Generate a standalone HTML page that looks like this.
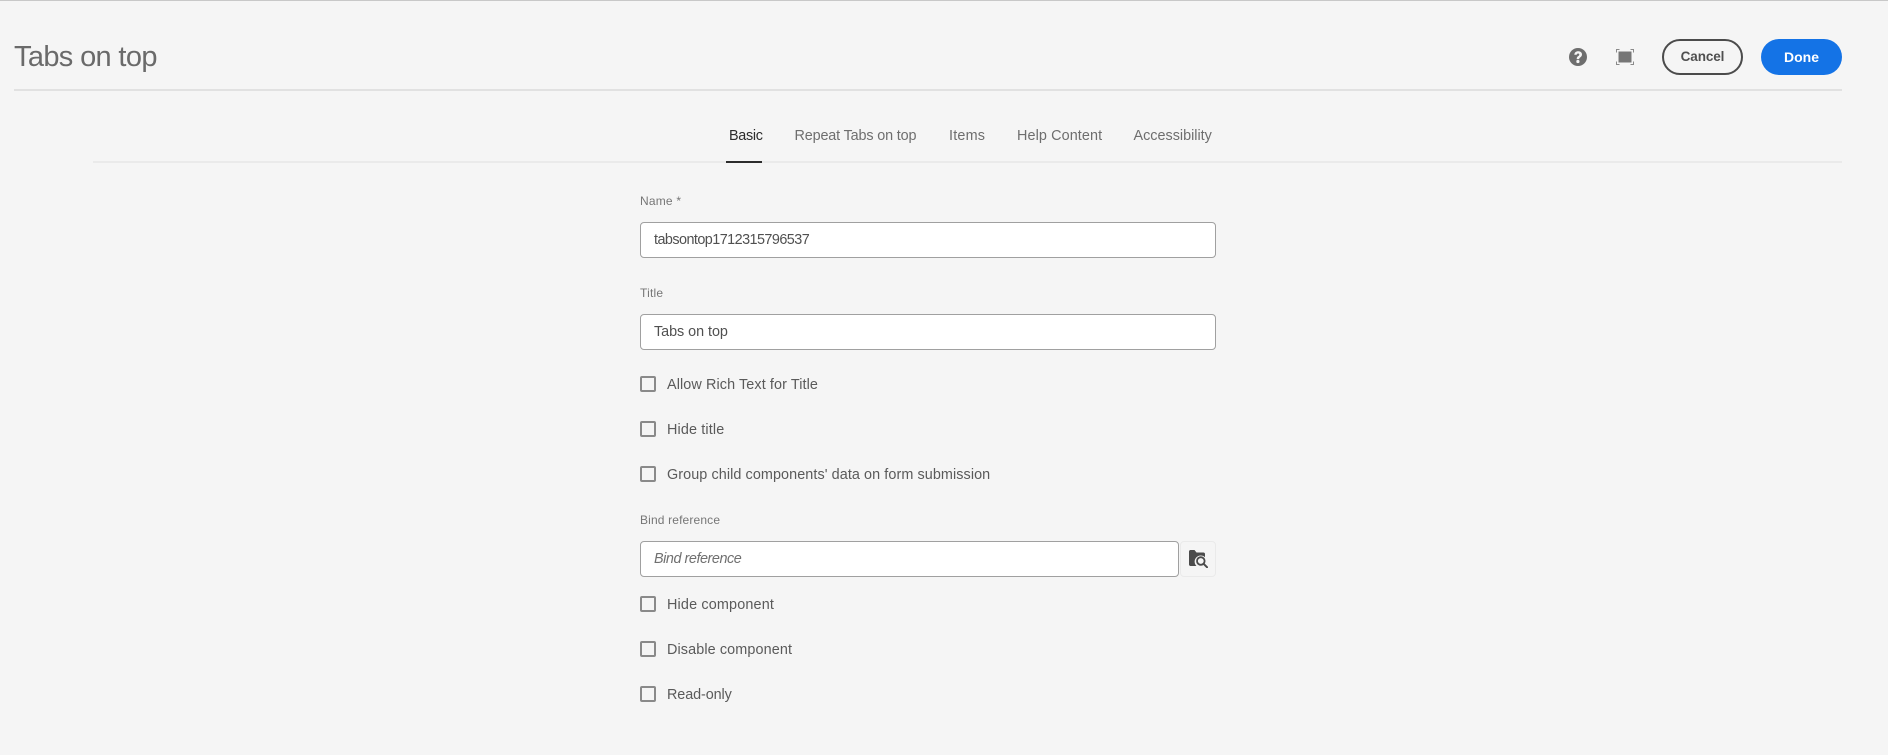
<!DOCTYPE html>
<html lang="en"><head><meta charset="utf-8"><title>Tabs on top</title>
<style>
html,body{margin:0;padding:0;width:1888px;height:755px;overflow:hidden;background:#f5f5f5}
body{position:relative;font-family:"Liberation Sans",sans-serif;color:#4b4b4b}
.a{position:absolute;white-space:nowrap}
.tab{top:125.500px;line-height:20px;font-size:14.4px;color:#6e6e6e;letter-spacing:-.1px}
.lbl{left:640px;line-height:16px;font-size:12px;color:#767676;letter-spacing:.2px}
.inp{box-sizing:border-box;left:640px;width:576px;height:36px;background:#fff;border:1px solid #a0a0a0;border-radius:4px;padding-left:13px;line-height:35px;font-size:14.4px;color:#505050}
.cb{box-sizing:border-box;left:640px;width:16px;height:16px;border:2px solid #8a8a8a;border-radius:2px;background:#f5f5f5}
.ct{left:667px;line-height:20px;font-size:14.4px;color:#5a5a5a}
.btn{box-sizing:border-box;top:39px;width:81px;height:36px;border-radius:18px;text-align:center;font-size:14px;font-weight:bold;line-height:32px}
</style></head><body>
<div class="a" style="left:0;top:0;width:1888px;height:1px;background:#c8c8c8"></div>
<div class="a" style="left:14px;top:39px;font-size:29px;line-height:36px;color:#6a6a6a;letter-spacing:-.65px">Tabs on top</div>
<div class="a" style="left:14px;top:89px;width:1828px;height:2px;background:#e1e1e1"></div>
<svg class="a" style="left:1569px;top:48px" width="18" height="18" viewBox="0 0 18 18"><circle cx="9" cy="9" r="9" fill="#6e6e6e"/><path d="M5.300 6.700C5.500 4.600 7 3.300 9.200 3.300c2.300 0 3.800 1.300 3.800 3.200 0 1.500-.9 2.300-1.900 3-.7.5-.9.900-.9 1.600H7.700c0-1.400.4-2.100 1.300-2.800.8-.6 1.300-1 1.300-1.700s-.5-1.100-1.200-1.100c-.9 0-1.300.5-1.400 1.300z" fill="#f5f5f5"/><circle cx="8.900" cy="13.500" r="1.600" fill="#f5f5f5"/></svg>
<svg class="a" style="left:1616px;top:49px" width="18" height="16" viewBox="0 0 18 16"><rect x="2.500" y="2.500" width="13" height="11" fill="#767676"/><path d="M.5 3.500V.5H3.500M14.500 .5h3V3.500M17.500 12.500v3H14.500M3.500 15.500H.5V12.500" fill="none" stroke="#8a8a8a" stroke-width="1"/></svg>
<div class="a btn" style="left:1662px;border:2px solid #4b4b4b;color:#505050;font-size:13.5px;letter-spacing:-.1px">Cancel</div>
<div class="a btn" style="left:1761px;background:#1473e6;color:#fff;line-height:36px">Done</div>

<div class="a tab" style="left:729px;color:#2c2c2c;letter-spacing:-.3px">Basic</div>
<div class="a tab" style="left:794.500px;letter-spacing:-.15px">Repeat Tabs on top</div>
<div class="a tab" style="left:949px;letter-spacing:.2px">Items</div>
<div class="a tab" style="left:1017px;letter-spacing:.1px">Help Content</div>
<div class="a tab" style="left:1133.500px;letter-spacing:0">Accessibility</div>
<div class="a" style="left:93px;top:161px;width:1749px;height:2px;background:#eaeaea"></div>
<div class="a" style="left:726px;top:161px;width:36px;height:2px;background:#2c2c2c"></div>

<div class="a lbl" style="top:193px">Name *</div>
<div class="a inp" style="top:222px;letter-spacing:-.55px">tabsontop1712315796537</div>
<div class="a lbl" style="top:285px">Title</div>
<div class="a inp" style="top:314px;letter-spacing:-.05px">Tabs on top</div>
<div class="a cb" style="top:376px"></div><div class="a ct" style="top:374.500px;letter-spacing:.1px">Allow Rich Text for Title</div>
<div class="a cb" style="top:421px"></div><div class="a ct" style="top:419.500px;letter-spacing:.14px">Hide title</div>
<div class="a cb" style="top:466px"></div><div class="a ct" style="top:464.500px;letter-spacing:.08px">Group child components' data on form submission</div>
<div class="a lbl" style="top:512px;letter-spacing:.15px">Bind reference</div>
<div class="a inp" style="top:541px;width:539px;font-style:italic;color:#707070;letter-spacing:-.45px">Bind reference</div>
<div class="a" style="box-sizing:border-box;left:1180px;top:541px;width:36px;height:36px;border:1px solid #eaeaea;border-radius:4px;background:#f5f5f5"></div>
<svg class="a" style="left:1189px;top:550px" width="19" height="18" viewBox="0 0 19 18"><path d="M0 1.500C0 .7.7 0 1.500 0h4L7.500 2.500H14.500c.8 0 1.500.7 1.500 1.500v3.200A6 6 0 0 0 7.500 16H1.500C.7 16 0 15.300 0 14.500z" fill="#4b4b4b"/><circle cx="11.800" cy="11" r="3.800" fill="none" stroke="#4b4b4b" stroke-width="1.800"/><path d="M14.600 13.800L18 17.200" stroke="#4b4b4b" stroke-width="2" stroke-linecap="round"/></svg>
<div class="a cb" style="top:596px"></div><div class="a ct" style="top:595px;letter-spacing:.16px">Hide component</div>
<div class="a cb" style="top:641px"></div><div class="a ct" style="top:640px;letter-spacing:.11px">Disable component</div>
<div class="a cb" style="top:686px"></div><div class="a ct" style="top:685px;letter-spacing:-.1px">Read-only</div>
</body></html>
